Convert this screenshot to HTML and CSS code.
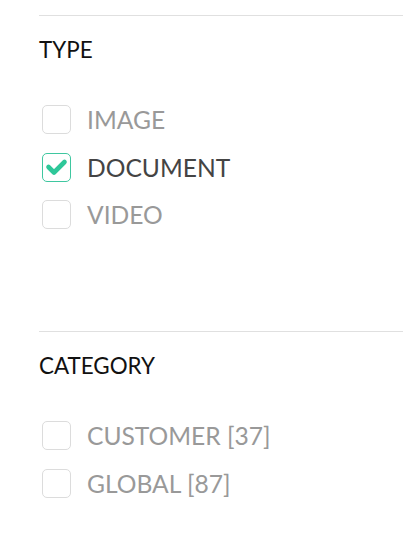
FILE: index.html
```html
<!DOCTYPE html>
<html>
<head>
<meta charset="utf-8">
<link rel="stylesheet" href="styles.css">
</head>
<body>
<div class="panel">
  <section class="group">
    <h3 class="title">TYPE</h3>
    <ul class="options">
      <li class="option"><span class="box"></span><span class="label">IMAGE</span></li>
      <li class="option checked"><span class="box"><svg class="tick" viewBox="0 0 27 27" width="27" height="27"><path d="M5.5 13 L11 18.5 L21.5 8" fill="none" stroke="#2ec799" stroke-width="4.6" stroke-linecap="round" stroke-linejoin="round"/></svg></span><span class="label">DOCUMENT</span></li>
      <li class="option"><span class="box"></span><span class="label">VIDEO</span></li>
    </ul>
  </section>
  <section class="group last">
    <h3 class="title">CATEGORY</h3>
    <ul class="options">
      <li class="option"><span class="box"></span><span class="label">CUSTOMER [37]</span></li>
      <li class="option"><span class="box"></span><span class="label">GLOBAL [87]</span></li>
    </ul>
  </section>
</div>
</body>
</html>
```

FILE: styles.css
```css
html, body {
  margin: 0;
  padding: 0;
  background: #fff;
}
body {
  font-family: Lato, "Open Sans", sans-serif;
  overflow: hidden;
}
.panel {
  padding-top: 15px;
  padding-left: 39px;
}
.group {
  border-top: 1px solid #e0e0e0;
  height: 315px;
}
.group.last {
  height: auto;
  padding-bottom: 20px;
}
.title {
  margin: 0;
  padding-top: 21px;
  font-size: 22.4px;
  line-height: 26px;
  font-weight: 400;
  color: #111;
}
.options {
  list-style: none;
  margin: 0;
  padding: 0;
  padding-top: 42px;
  display: flex;
  flex-direction: column;
  gap: 18.5px;
}
.option {
  display: flex;
  align-items: center;
  height: 29px;
}
.box {
  box-sizing: border-box;
  width: 29px;
  height: 29px;
  margin-left: 3px;
  border: 1px solid #dcdcdc;
  border-radius: 5px;
  display: flex;
  align-items: center;
  justify-content: center;
}
.checked .box {
  border-color: #3fc7a0;
}
.tick {
  display: block;
}
.label {
  margin-left: 16px;
  font-size: 24.6px;
  color: #999;
}
.checked .label {
  color: #444;
}
```
